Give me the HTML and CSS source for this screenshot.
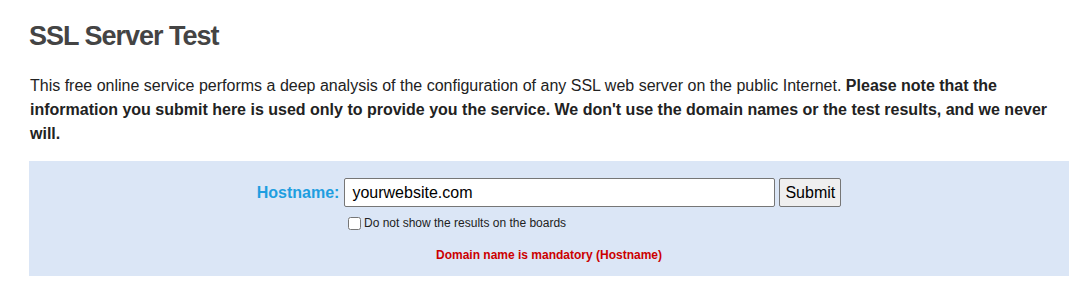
FILE: index.html
```html
<!DOCTYPE html>
<html>
<head>
<meta charset="utf-8">
<link rel="stylesheet" href="styles.css">
</head>
<body>
<div class="page">
  <h1 class="title">SSL Server Test</h1>
  <p class="intro">This free online service performs a deep analysis of the configuration of any SSL web server on the public Internet. <b>Please note that the information you submit here is used only to provide you the service. We don't use the domain names or the test results, and we never will.</b></p>
  <form class="box">
    <div class="row">
      <label class="label" for="host">Hostname:</label>
      <input class="input" id="host" type="text" value="yourwebsite.com">
      <button class="submit" type="button">Submit</button>
    </div>
    <div class="check-row">
      <label class="check"><input type="checkbox" class="cb"> Do not show the results on the boards</label>
    </div>
    <div class="error">Domain name is mandatory (Hostname)</div>
  </form>
</div>
</body>
</html>
```
FILE: styles.css
```css
html, body { margin: 0; padding: 0; background: #fff; }
body { font-family: "Liberation Sans", Arial, sans-serif; color: #222; }
.page { padding: 0 20px 0 29px; }
.title {
  margin: 0;
  padding-top: 20px;
  font-size: 27px;
  line-height: 32px;
  font-weight: bold;
  color: #444;
  letter-spacing: -1px;
}
.intro {
  margin: 22px 0 0 1px;
  font-size: 16px;
  line-height: 24px;
  color: #222;
}
.intro b { color: #222; }
.box {
  margin-top: 15px;
  background: #dbe6f6;
  height: 115px;
  box-sizing: border-box;
  padding-top: 17px;
  display: flex;
  flex-direction: column;
  align-items: center;
}
.row { display: flex; align-items: center; gap: 4px; }
.label {
  color: #1e9ee0;
  font-weight: bold;
  font-size: 16px;
  margin-right: 1px;
}
.input {
  width: 431px;
  height: 29px;
  box-sizing: border-box;
  border: 1px solid #767676;
  border-radius: 2px;
  font-family: "Liberation Sans", Arial, sans-serif;
  font-size: 16px;
  padding: 1px 7px;
  color: #000;
  background: #fff;
  margin: 0;
}
.submit {
  height: 29px;
  box-sizing: border-box;
  border: 1px solid #767676;
  border-radius: 2px;
  background: #efefef;
  font-family: "Liberation Sans", Arial, sans-serif;
  font-size: 16px;
  color: #000;
  padding: 1px 5px;
  margin: 0;
}
.check-row { align-self: stretch; display: flex; justify-content: center; margin-top: 9px; }
.check-inner { }
.check { width: 582px; padding-left: 90px; box-sizing: border-box; font-size: 12px; color: #222; display: flex; align-items: center; }
.cb { margin: 0 3px 0 0; width: 13px; height: 13px; }
.error {
  margin-top: 18px;
  color: #cc0000;
  font-size: 12px;
  font-weight: bold;
}
```
